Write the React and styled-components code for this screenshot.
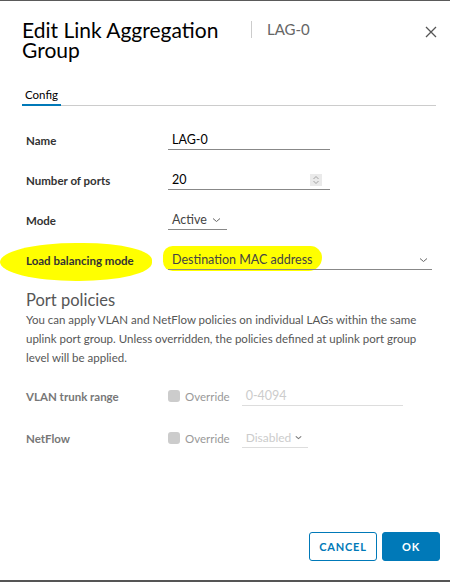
import React from "react";
import styled, { createGlobalStyle } from "styled-components";

const Global = createGlobalStyle`
  html, body { margin: 0; padding: 0; background: #fff; }
  body { font-family: Lato, "Noto Sans", sans-serif; }
`;

const Modal = styled.div`
  width: 450px;
  height: 582px;
  box-sizing: border-box;
  border-top: 1px solid #5a5a5a;
  border-bottom: 2px solid #555;
  display: flex;
  flex-direction: column;
  position: relative;
  overflow: hidden;
`;

const Header = styled.div`
  display: flex;
  align-items: flex-start;
  padding: 19px 12px 0 22px;
`;

const Title = styled.h1`
  margin: 0;
  width: 222px;
  font-size: 21px;
  line-height: 20px;
  font-weight: 400;
  color: #000;
`;

const SubTitle = styled.div`
  margin-left: 7px;
  margin-top: 1px;
  padding-left: 15px;
  border-left: 1px solid #ccc;
  height: 17px;
  font-size: 15px;
  line-height: 17px;
  color: #666;
`;

const Close = styled.button`
  margin-left: auto;
  margin-top: 5px;
  border: 0;
  background: none;
  padding: 0;
  width: 14px;
  height: 14px;
  display: flex;
`;

const Tabs = styled.div`
  margin: 28px 14px 0 22px;
  border-bottom: 1px solid #ccc;
  display: flex;
`;

const Tab = styled.div`
  font-size: 11.5px;
  color: #000;
  padding: 0 3px 3px;
  border-bottom: 2px solid #0079b8;
  margin-bottom: -1px;
`;

const Form = styled.div`
  padding: 14px 18px 0 26px;
  display: grid;
  grid-template-columns: 142px 1fr;
  grid-auto-rows: 40px;
  align-items: center;
`;

const Label = styled.div`
  font-size: 11.5px;
  font-weight: 700;
  color: ${(p) => (p.$muted ? "#777" : "#333")};
  position: relative;
`;

const Field = styled.div`
  display: flex;
  align-items: center;
  position: relative;
`;

const Underlined = styled.div`
  width: ${(p) => p.$w}px;
  height: 19px;
  box-sizing: border-box;
  border-bottom: 1px solid ${(p) => (p.$light ? "#ddd" : "#888")};
  display: flex;
  align-items: center;
  padding: 0 ${(p) => (p.$tight ? 6 : 4)}px 0 4px;
  font-size: ${(p) => (p.$small ? 12 : 12.5)}px;
  color: ${(p) => p.$color || "#000"};
  position: relative;
  z-index: 1;
`;

const Chevron = styled.svg`
  margin-left: auto;
  flex: none;
  width: ${(p) => p.$size}px;
  height: ${(p) => Math.round(p.$size * 0.67)}px;
`;

const Spinner = styled.div`
  margin-left: auto;
  margin-right: 4px;
  width: 12px;
  height: 12px;
  background: #eaeaea;
  display: flex;
  align-items: center;
  justify-content: center;
`;

const Highlight = styled.div`
  position: absolute;
  background: #ffff00;
  z-index: 0;
`;

const LabelText = styled.span`
  position: relative;
  z-index: 1;
`;

const Section = styled.div`
  padding: 10px 20px 0 26px;
`;

const SectionTitle = styled.h2`
  margin: 0;
  font-size: 16.5px;
  font-weight: 400;
  color: #565656;
  line-height: 20px;
`;

const Para = styled.p`
  margin: 0;
  font-size: 11.5px;
  line-height: 19px;
  color: #565656;
`;

const PolicyForm = styled(Form)`
  padding-top: 8px;
  grid-auto-rows: 42px;
`;

const Check = styled.span`
  width: 12px;
  height: 12px;
  border-radius: 3px;
  background: #ccc;
  margin-right: 5px;
`;

const CheckLabel = styled.span`
  font-size: 11.5px;
  color: #999;
  margin-right: 12px;
`;

const Footer = styled.div`
  margin-top: auto;
  padding: 0 10px 19px 0;
  display: flex;
  justify-content: flex-end;
  gap: 5px;
`;

const Button = styled.button`
  height: 29px;
  padding: 0;
  width: ${(p) => p.$w}px;
  border-radius: 3px;
  font-family: inherit;
  font-size: 11px;
  font-weight: 700;
  letter-spacing: 0.8px;
  border: 1px solid #0079b8;
  background: ${(p) => (p.$primary ? "#0079b8" : "#fff")};
  color: ${(p) => (p.$primary ? "#fff" : "#0079b8")};
`;

const ChevronIcon = ({ color = "#666", size = 9 }) => (
  <Chevron viewBox="0 0 9 6" $size={size}>
    <path d="M1 1.5 L4.5 4.5 L8 1.5" fill="none" stroke={color} strokeWidth={size < 9 ? 1.3 : 1} />
  </Chevron>
);

export default function App() {
  return (
    <>
      <Global />
      <Modal>
        <Header>
          <Title>Edit Link Aggregation Group</Title>
          <SubTitle>LAG-0</SubTitle>
          <Close aria-label="close">
            <svg width="14" height="14" viewBox="0 0 14 14">
              <path d="M2 2 L12 12 M12 2 L2 12" stroke="#555" strokeWidth="1.3" />
            </svg>
          </Close>
        </Header>
        <Tabs>
          <Tab>Config</Tab>
        </Tabs>
        <Form>
          <Label>Name</Label>
          <Field>
            <Underlined $w={162}>LAG-0</Underlined>
          </Field>
          <Label>Number of ports</Label>
          <Field>
            <Underlined $w={162}>
              20
              <Spinner>
                <svg width="8" height="10" viewBox="0 0 8 10">
                  <path d="M1.5 4 L4 1.5 L6.5 4 M1.5 6 L4 8.5 L6.5 6" fill="none" stroke="#999" strokeWidth="0.9" />
                </svg>
              </Spinner>
            </Underlined>
          </Field>
          <Label>Mode</Label>
          <Field>
            <Underlined $w={59} $color="#444" $tight>
              Active
              <ChevronIcon />
            </Underlined>
          </Field>
          <Label>
            <Highlight style={{ left: -26, top: -11, width: 152, height: 38, borderRadius: "50% 45% 48% 50%" }} />
            <LabelText>Load balancing mode</LabelText>
          </Label>
          <Field>
            <Highlight style={{ left: -5, top: -5, width: 159, height: 25, borderRadius: "10px 12px 14px 10px" }} />
            <Underlined $w={264} $color="#444">
              Destination MAC address
              <ChevronIcon />
            </Underlined>
          </Field>
        </Form>
        <Section>
          <SectionTitle>Port policies</SectionTitle>
          <Para>
            You can apply VLAN and NetFlow policies on individual LAGs within the same uplink port group. Unless overridden, the policies defined at uplink port group level will be applied.
          </Para>
        </Section>
        <PolicyForm>
          <Label $muted>VLAN trunk range</Label>
          <Field>
            <Check />
            <CheckLabel>Override</CheckLabel>
            <Underlined $w={161} $light $color="#ccc">0-4094</Underlined>
          </Field>
          <Label $muted>NetFlow</Label>
          <Field>
            <Check />
            <CheckLabel>Override</CheckLabel>
            <Underlined $w={66} $light $color="#ccc" $tight $small>
              Disabled
              <ChevronIcon color="#777" size={7} />
            </Underlined>
          </Field>
        </PolicyForm>
        <Footer>
          <Button $w={68}>CANCEL</Button>
          <Button $w={58} $primary>OK</Button>
        </Footer>
      </Modal>
    </>
  );
}
